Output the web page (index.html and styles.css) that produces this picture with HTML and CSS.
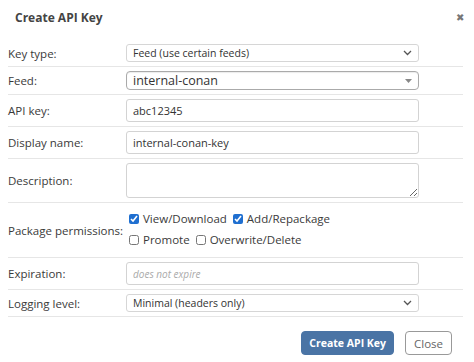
FILE: index.html
```html
<!DOCTYPE html>
<html lang="en">
<head>
    <meta charset="UTF-8">
    <meta name="viewport" content="width=device-width, initial-scale=1.0">
    <title>Create API Key</title>
    <link rel="stylesheet" href="styles.css">
</head>
<body>
    <div class="modal">
        <div class="modal-header">
            <h3>Create API Key</h3>
            <span class="close">&#x2716;</span>
        </div>

        <form class="modal-body">
            <div class="row">
                <label>Key type:</label>
                <div class="field">
                    <div class="select">
                        <span>Feed (use certain feeds)</span>
                        <svg width="9" height="6" viewBox="0 0 9 6"><path d="M1 1l3.5 3.5L8 1" fill="none" stroke="#555" stroke-width="1.3"/></svg>
                    </div>
                </div>
            </div>
            <div class="row">
                <label>Feed:</label>
                <div class="field">
                    <div class="select feed">
                        <span>internal-conan</span>
                        <svg width="7" height="4" viewBox="0 0 7 4"><path d="M0 0h7L3.5 4z" fill="#888"/></svg>
                    </div>
                </div>
            </div>
            <div class="row">
                <label>API key:</label>
                <div class="field"><input type="text" value="abc12345"></div>
            </div>
            <div class="row">
                <label>Display name:</label>
                <div class="field"><input type="text" value="internal-conan-key"></div>
            </div>
            <div class="row">
                <label>Description:</label>
                <div class="field"><textarea></textarea></div>
            </div>
            <div class="row">
                <label>Package permissions:</label>
                <div class="field checks">
                    <div class="check-line">
                        <label class="check"><input type="checkbox" checked>View/Download</label>
                        <label class="check"><input type="checkbox" checked>Add/Repackage</label>
                    </div>
                    <div class="check-line">
                        <label class="check"><input type="checkbox">Promote</label>
                        <label class="check"><input type="checkbox">Overwrite/Delete</label>
                    </div>
                </div>
            </div>
            <div class="row">
                <label>Expiration:</label>
                <div class="field"><input type="text" placeholder="does not expire"></div>
            </div>
            <div class="row">
                <label>Logging level:</label>
                <div class="field">
                    <div class="select">
                        <span>Minimal (headers only)</span>
                        <svg width="9" height="6" viewBox="0 0 9 6"><path d="M1 1l3.5 3.5L8 1" fill="none" stroke="#555" stroke-width="1.3"/></svg>
                    </div>
                </div>
            </div>
        </form>

        <div class="modal-footer">
            <button class="btn btn-primary">Create API Key</button>
            <button class="btn">Close</button>
        </div>
    </div>
</body>
</html>
```

FILE: styles.css
```css
body {
    margin: 0;
    background-color: #fff;
    font-family: 'Open Sans', 'Noto Sans', sans-serif;
    color: #444;
}
.modal {
    width: 474px;
    height: 362px;
    background-color: #fff;
}
.modal-header {
    display: flex;
    justify-content: space-between;
    align-items: center;
    height: 34px;
    padding: 0 10px 0 15px;
}
.modal-header h3 {
    margin: 0;
    font-size: 12px;
    font-weight: bold;
    color: #444;
}
.close {
    font-size: 10px;
    color: #777;
}
.modal-body {
    margin: 6px 0 0 8px;
    width: 455px;
}
.row {
    display: grid;
    grid-template-columns: 118px 293px;
    align-items: center;
    padding: 4px 0;
    border-bottom: 1px solid #e6e6e6;
}
.row > label {
    font-size: 11.5px;
    color: #3a3a3a;
}
.select {
    display: flex;
    justify-content: space-between;
    align-items: center;
    height: 18px;
    padding: 0 6px;
    border: 1px solid #d6d6d6;
    border-radius: 3px;
    font-size: 10.5px;
    color: #333;
    box-sizing: border-box;
}
.select.feed {
    height: 19px;
    border-color: #aaa;
    border-radius: 4px;
    font-size: 12.5px;
    box-shadow: inset 0 1px 1px rgba(0,0,0,0.08);
}
input[type=text], textarea {
    display: block;
    width: 293px;
    height: 23px;
    margin: 0;
    padding: 0 6px;
    border: 1px solid #d3d3d3;
    border-radius: 3px;
    font-family: 'Open Sans', 'Noto Sans', sans-serif;
    font-size: 11px;
    color: #333;
    box-sizing: border-box;
}
input::placeholder {
    color: #aaa;
    font-style: italic;
    font-size: 10px;
}
textarea {
    height: 35px;
    resize: vertical;
}
.checks {
    padding: 1px 0 3px;
}
.check-line {
    display: flex;
    gap: 3px;
    height: 21px;
    align-items: center;
}
.check {
    display: flex;
    align-items: center;
    font-size: 11.5px;
    color: #3a3a3a;
}
.check input {
    width: 10px;
    height: 10px;
    margin: 0 4px 0 3px;
    accent-color: #1f6fd0;
}
.modal-footer {
    display: flex;
    justify-content: flex-end;
    gap: 11px;
    padding: 14px 22px 0 0;
}
.btn {
    height: 24px;
    padding: 0 8px;
    border: 1px solid #999;
    border-radius: 4px;
    background-color: #fff;
    color: #666;
    font-family: 'Open Sans', 'Noto Sans', sans-serif;
    font-size: 11.5px;
}
.btn-primary {
    padding: 0 7px;
    border-color: #4a74a5;
    background-color: #4a74a5;
    color: #fff;
    font-size: 10.5px;
    font-weight: bold;
}
```
